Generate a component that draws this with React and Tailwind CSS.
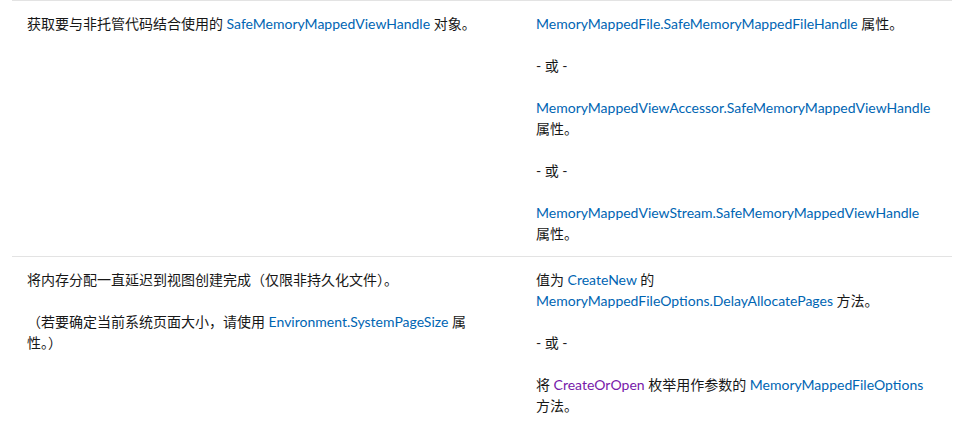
function Link({ children, visited }) {
    return (
        <a href="#" className={visited ? 'text-[#7719aa]' : 'text-[#0065b3]'}>
            {children}
        </a>
    );
}

function Cell({ children, left }) {
    return (
        <div className={`pt-3 pb-3 ${left ? 'pl-[15px] pr-4' : 'pl-4 pr-4'} flex flex-col gap-[21px]`}>
            {children}
        </div>
    );
}

export default function App() {
    return (
        <div className="bg-white min-h-screen text-[14px] leading-[21px] text-[#171717]" style={{ fontFamily: 'Lato, "Noto Sans CJK SC", sans-serif' }}>
            <div className="ml-3 w-[940px]">
                <div className="grid grid-cols-[508px_432px] border-t border-[#e3e3e3]">
                    <Cell left>
                        <p>
                            获取要与非托管代码结合使用的 <Link>SafeMemoryMappedViewHandle</Link> 对象。
                        </p>
                    </Cell>
                    <Cell>
                        <p>
                            <Link>MemoryMappedFile.SafeMemoryMappedFileHandle</Link> 属性。
                        </p>
                        <p>- 或 -</p>
                        <p>
                            <Link>MemoryMappedViewAccessor.SafeMemoryMappedViewHandle</Link>
                            <br />
                            属性。
                        </p>
                        <p>- 或 -</p>
                        <p>
                            <Link>MemoryMappedViewStream.SafeMemoryMappedViewHandle</Link>
                            <br />
                            属性。
                        </p>
                    </Cell>
                </div>
                <div className="grid grid-cols-[508px_432px] border-t border-[#e3e3e3]">
                    <Cell left>
                        <p>将内存分配一直延迟到视图创建完成（仅限非持久化文件）。</p>
                        <p>
                            （若要确定当前系统页面大小，请使用 <Link>Environment.SystemPageSize</Link> 属
                            <br />
                            性。）
                        </p>
                    </Cell>
                    <Cell>
                        <p>
                            值为 <Link>CreateNew</Link> 的
                            <br />
                            <Link>MemoryMappedFileOptions.DelayAllocatePages</Link> 方法。
                        </p>
                        <p>- 或 -</p>
                        <p>
                            将 <Link visited>CreateOrOpen</Link> 枚举用作参数的 <Link>MemoryMappedFileOptions</Link>
                            <br />
                            方法。
                        </p>
                    </Cell>
                </div>
            </div>
        </div>
    );
}
